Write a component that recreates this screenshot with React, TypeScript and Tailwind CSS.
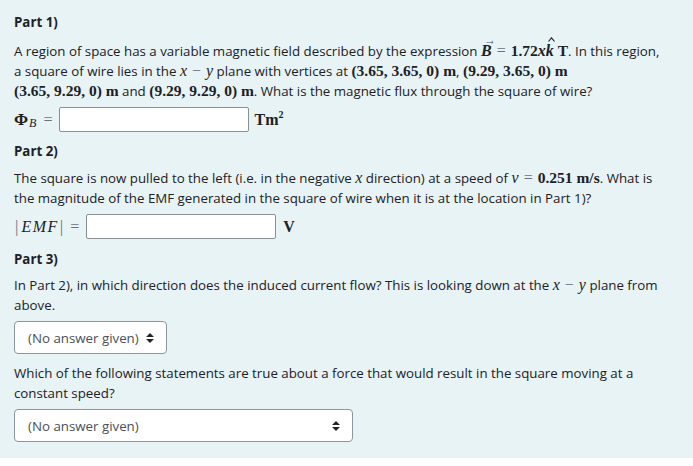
import React from 'react';

const serif = "font-['Liberation_Serif',serif] leading-none";

// small helpers for the inline maths
function V({ children, bold = false }: { children: React.ReactNode; bold?: boolean }) {
    return <span className={`${serif} italic text-[16px] ${bold ? 'font-bold' : ''}`}>{children}</span>;
}

function R({ children }: { children: React.ReactNode }) {
    return <span className={`${serif} font-bold text-[15.5px]`}>{children}</span>;
}

function Minus() {
    return <span className={`${serif} text-[16px] text-gray-500 mx-[5px]`}>−</span>;
}

function Eq({ gap = 'mx-[5px]' }: { gap?: string }) {
    return <span className={`${serif} text-[16px] text-gray-500 ${gap}`}>=</span>;
}

function SortIcon() {
    return (
        <svg width="8" height="12" viewBox="0 0 8 12" className="shrink-0">
            <polygon points="0,5 4,1 8,5" fill="#212529" />
            <polygon points="0,7 8,7 4,11" fill="#212529" />
        </svg>
    );
}

function AnswerSelect({ width }: { width: string }) {
    return (
        <div className={`${width} h-[33px] bg-white border border-[#8f959e] rounded-[4px] flex items-center justify-between pl-[13px] pr-[12px] text-[#495057]`}>
            <span>(No answer given)</span>
            <SortIcon />
        </div>
    );
}

function Heading({ children }: { children: React.ReactNode }) {
    return <h3 className="font-bold text-[13.3px] leading-[20px] text-[#1d2125]">{children}</h3>;
}

export default function App() {
    return (
        <div className="bg-[#e7f3f5] text-[#1d2125] font-['Open_Sans',sans-serif] text-[13.3px] leading-[20px] px-[14px] pt-[12px] pb-[16px] w-[693px]">
            <Heading>Part 1)</Heading>
            <p className="mt-[9px] whitespace-nowrap">
                A region of space has a variable magnetic field described by the expression{' '}
                <span className="relative inline-block">
                    <V bold>B</V>
                    <span className={`absolute left-[3px] -top-[7px] ${serif} text-[12px] text-gray-600`}>→</span>
                </span>
                <Eq />
                <R>1.72</R>
                <V bold>x</V>
                <span className="relative inline-block">
                    <V bold>k</V>
                    <svg width="7" height="5" viewBox="0 0 7 5" className="absolute left-[2px] -top-[4px]">
                        <polyline points="0.5,4.5 3.5,0.8 6.5,4.5" fill="none" stroke="#1d2125" strokeWidth="1.1" />
                    </svg>
                </span>
                <R>&nbsp;T</R>. In this region,
                <br />
                a square of wire lies in the <V>x</V>
                <Minus />
                <V>y</V> plane with vertices at <R>(3.65, 3.65, 0) m</R>, <R>(9.29, 3.65, 0) m</R>
                <br />
                <R>(3.65, 9.29, 0) m</R> and <R>(9.29, 9.29, 0) m</R>. What is the magnetic flux through the square of wire?
            </p>
            <div className="mt-[6px] flex items-center h-[25px]">
                <span className={`${serif} text-[17px] font-bold`}>Φ</span>
                <span className={`${serif} italic text-[12px] mt-[6px] ml-[1px]`}>B</span>
                <Eq gap="mx-[7px]" />
                <div className="w-[190px] h-[25px] bg-white border border-[#8a8f96] rounded-[2px]" />
                <span className={`${serif} font-bold text-[16px] ml-[5px]`}>
                    Tm<sup className="text-[10px] -top-[7px]">2</sup>
                </span>
            </div>

            <div className="mt-[9px]">
                <Heading>Part 2)</Heading>
            </div>
            <p className="mt-[7px] whitespace-nowrap">
                The square is now pulled to the left (i.e. in the negative <V>x</V> direction) at a speed of <V>v</V>
                <Eq />
                <R>0.251 m/s</R>. What is
                <br />
                the magnitude of the EMF generated in the square of wire when it is at the location in Part 1)?
            </p>
            <div className="mt-[6px] flex items-center h-[25px]">
                <span className={`${serif} text-[17px] text-gray-500 ml-[1px] mr-[3px]`}>|</span>
                <span className={`${serif} italic text-[16px] tracking-[1.5px]`}>EMF</span>
                <span className={`${serif} text-[17px] text-gray-500 ml-[1px]`}>|</span>
                <Eq gap="mx-[7px]" />
                <div className="w-[190px] h-[25px] bg-white border border-[#8a8f96] rounded-[2px]" />
                <span className={`${serif} font-bold text-[16px] ml-[7px]`}>V</span>
            </div>

            <div className="mt-[10px]">
                <Heading>Part 3)</Heading>
            </div>
            <p className="mt-[6px] whitespace-nowrap">
                In Part 2), in which direction does the induced current flow? This is looking down at the <V>x</V>
                <Minus />
                <V>y</V> plane from
                <br />
                above.
            </p>
            <div className="mt-[6px]">
                <AnswerSelect width="w-[153px]" />
            </div>

            <p className="mt-[9px] whitespace-nowrap">
                Which of the following statements are true about a force that would result in the square moving at a
                <br />
                constant speed?
            </p>
            <div className="mt-[6px]">
                <AnswerSelect width="w-[339px]" />
            </div>
        </div>
    );
}
